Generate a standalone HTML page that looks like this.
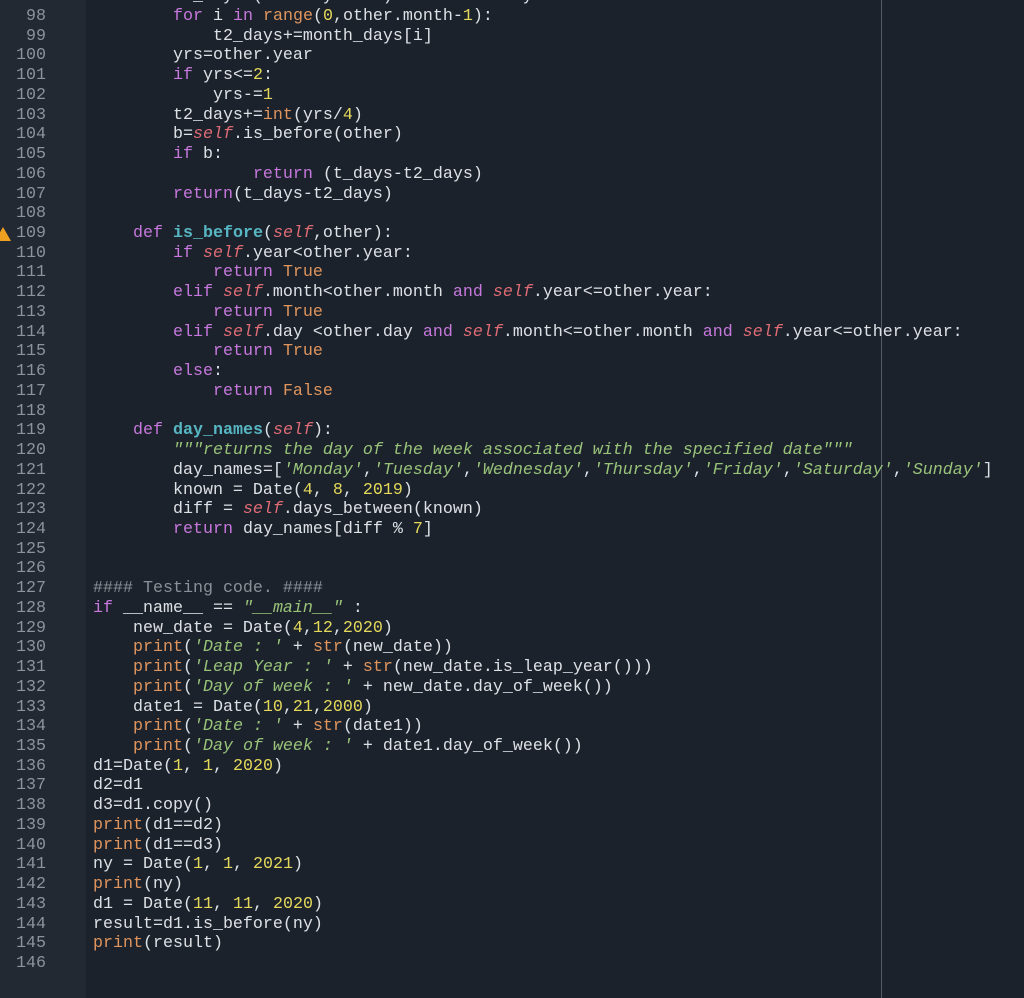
<!DOCTYPE html>
<html><head><meta charset="utf-8"><style>
html,body{margin:0;padding:0;}
body{width:1024px;height:998px;overflow:hidden;background:#1c222c;position:relative;font-family:"Liberation Mono",monospace;font-size:16.67px;}
#g{position:absolute;left:0;top:0;width:86px;height:998px;background:#222933;}
#ruler{position:absolute;left:881px;top:0;width:1px;height:998px;background:#555b63;}
.l{position:absolute;left:0;height:19.73px;line-height:19.73px;white-space:pre;color:#dde0e5;}
.n{position:absolute;left:0;width:46px;text-align:right;color:#8d939b;}
.c{position:absolute;left:93px;}
.k{color:#c678dd}.f{color:#56b6c2;font-weight:bold}.s{color:#e06c75;font-style:italic}.b{color:#e0955d}.y{color:#e5d95b}.g{color:#98c379;font-style:italic}.o{color:#e0955d}.cm{color:#8b9098}
#warn{position:absolute;left:0;top:227px;width:0;height:0;border-left:8px solid transparent;border-right:8px solid transparent;border-bottom:14px solid #f0a020;margin-left:-5px;}
</style></head><body>
<div id="g"></div><div id="ruler"></div>
<div id="warn"></div>
<div class="l" style="top:-12.7px"><span class="n">97</span><span class="c">        t2_days=(other.year-1)*365+other.day</span></div>
<div class="l" style="top:7px"><span class="n">98</span><span class="c">        <span class="k">for</span> i <span class="k">in</span> <span class="b">range</span>(<span class="y">0</span>,other.month-<span class="y">1</span>):</span></div>
<div class="l" style="top:26.73px"><span class="n">99</span><span class="c">            t2_days+=month_days[i]</span></div>
<div class="l" style="top:46.46px"><span class="n">100</span><span class="c">        yrs=other.year</span></div>
<div class="l" style="top:66.19px"><span class="n">101</span><span class="c">        <span class="k">if</span> yrs&lt;=<span class="y">2</span>:</span></div>
<div class="l" style="top:85.92px"><span class="n">102</span><span class="c">            yrs-=<span class="y">1</span></span></div>
<div class="l" style="top:105.65px"><span class="n">103</span><span class="c">        t2_days+=<span class="b">int</span>(yrs/<span class="y">4</span>)</span></div>
<div class="l" style="top:125.38px"><span class="n">104</span><span class="c">        b=<span class="s">self</span>.is_before(other)</span></div>
<div class="l" style="top:145.11px"><span class="n">105</span><span class="c">        <span class="k">if</span> b:</span></div>
<div class="l" style="top:164.84px"><span class="n">106</span><span class="c">                <span class="k">return</span> (t_days-t2_days)</span></div>
<div class="l" style="top:184.57px"><span class="n">107</span><span class="c">        <span class="k">return</span>(t_days-t2_days)</span></div>
<div class="l" style="top:204.3px"><span class="n">108</span><span class="c"></span></div>
<div class="l" style="top:224.03px"><span class="n">109</span><span class="c">    <span class="k">def</span> <span class="f">is_before</span>(<span class="s">self</span>,other):</span></div>
<div class="l" style="top:243.76px"><span class="n">110</span><span class="c">        <span class="k">if</span> <span class="s">self</span>.year&lt;other.year:</span></div>
<div class="l" style="top:263.49px"><span class="n">111</span><span class="c">            <span class="k">return</span> <span class="o">True</span></span></div>
<div class="l" style="top:283.22px"><span class="n">112</span><span class="c">        <span class="k">elif</span> <span class="s">self</span>.month&lt;other.month <span class="k">and</span> <span class="s">self</span>.year&lt;=other.year:</span></div>
<div class="l" style="top:302.95px"><span class="n">113</span><span class="c">            <span class="k">return</span> <span class="o">True</span></span></div>
<div class="l" style="top:322.68px"><span class="n">114</span><span class="c">        <span class="k">elif</span> <span class="s">self</span>.day &lt;other.day <span class="k">and</span> <span class="s">self</span>.month&lt;=other.month <span class="k">and</span> <span class="s">self</span>.year&lt;=other.year:</span></div>
<div class="l" style="top:342.41px"><span class="n">115</span><span class="c">            <span class="k">return</span> <span class="o">True</span></span></div>
<div class="l" style="top:362.14px"><span class="n">116</span><span class="c">        <span class="k">else</span>:</span></div>
<div class="l" style="top:381.87px"><span class="n">117</span><span class="c">            <span class="k">return</span> <span class="o">False</span></span></div>
<div class="l" style="top:401.6px"><span class="n">118</span><span class="c"></span></div>
<div class="l" style="top:421.33px"><span class="n">119</span><span class="c">    <span class="k">def</span> <span class="f">day_names</span>(<span class="s">self</span>):</span></div>
<div class="l" style="top:441.06px"><span class="n">120</span><span class="c">        <span class="g">"""returns the day of the week associated with the specified date"""</span></span></div>
<div class="l" style="top:460.79px"><span class="n">121</span><span class="c">        day_names=[<span class="g">'Monday'</span>,<span class="g">'Tuesday'</span>,<span class="g">'Wednesday'</span>,<span class="g">'Thursday'</span>,<span class="g">'Friday'</span>,<span class="g">'Saturday'</span>,<span class="g">'Sunday'</span>]</span></div>
<div class="l" style="top:480.52px"><span class="n">122</span><span class="c">        known = Date(<span class="y">4</span>, <span class="y">8</span>, <span class="y">2019</span>)</span></div>
<div class="l" style="top:500.25px"><span class="n">123</span><span class="c">        diff = <span class="s">self</span>.days_between(known)</span></div>
<div class="l" style="top:519.98px"><span class="n">124</span><span class="c">        <span class="k">return</span> day_names[diff % <span class="y">7</span>]</span></div>
<div class="l" style="top:539.71px"><span class="n">125</span><span class="c"></span></div>
<div class="l" style="top:559.44px"><span class="n">126</span><span class="c"></span></div>
<div class="l" style="top:579.17px"><span class="n">127</span><span class="c"><span class="cm">#### Testing code. ####</span></span></div>
<div class="l" style="top:598.9px"><span class="n">128</span><span class="c"><span class="k">if</span> __name__ == <span class="g">"__main__"</span> :</span></div>
<div class="l" style="top:618.63px"><span class="n">129</span><span class="c">    new_date = Date(<span class="y">4</span>,<span class="y">12</span>,<span class="y">2020</span>)</span></div>
<div class="l" style="top:638.36px"><span class="n">130</span><span class="c">    <span class="b">print</span>(<span class="g">'Date : '</span> + <span class="b">str</span>(new_date))</span></div>
<div class="l" style="top:658.09px"><span class="n">131</span><span class="c">    <span class="b">print</span>(<span class="g">'Leap Year : '</span> + <span class="b">str</span>(new_date.is_leap_year()))</span></div>
<div class="l" style="top:677.82px"><span class="n">132</span><span class="c">    <span class="b">print</span>(<span class="g">'Day of week : '</span> + new_date.day_of_week())</span></div>
<div class="l" style="top:697.55px"><span class="n">133</span><span class="c">    date1 = Date(<span class="y">10</span>,<span class="y">21</span>,<span class="y">2000</span>)</span></div>
<div class="l" style="top:717.28px"><span class="n">134</span><span class="c">    <span class="b">print</span>(<span class="g">'Date : '</span> + <span class="b">str</span>(date1))</span></div>
<div class="l" style="top:737.01px"><span class="n">135</span><span class="c">    <span class="b">print</span>(<span class="g">'Day of week : '</span> + date1.day_of_week())</span></div>
<div class="l" style="top:756.74px"><span class="n">136</span><span class="c">d1=Date(<span class="y">1</span>, <span class="y">1</span>, <span class="y">2020</span>)</span></div>
<div class="l" style="top:776.47px"><span class="n">137</span><span class="c">d2=d1</span></div>
<div class="l" style="top:796.2px"><span class="n">138</span><span class="c">d3=d1.copy()</span></div>
<div class="l" style="top:815.93px"><span class="n">139</span><span class="c"><span class="b">print</span>(d1==d2)</span></div>
<div class="l" style="top:835.66px"><span class="n">140</span><span class="c"><span class="b">print</span>(d1==d3)</span></div>
<div class="l" style="top:855.39px"><span class="n">141</span><span class="c">ny = Date(<span class="y">1</span>, <span class="y">1</span>, <span class="y">2021</span>)</span></div>
<div class="l" style="top:875.12px"><span class="n">142</span><span class="c"><span class="b">print</span>(ny)</span></div>
<div class="l" style="top:894.85px"><span class="n">143</span><span class="c">d1 = Date(<span class="y">11</span>, <span class="y">11</span>, <span class="y">2020</span>)</span></div>
<div class="l" style="top:914.58px"><span class="n">144</span><span class="c">result=d1.is_before(ny)</span></div>
<div class="l" style="top:934.31px"><span class="n">145</span><span class="c"><span class="b">print</span>(result)</span></div>
<div class="l" style="top:954.04px"><span class="n">146</span><span class="c"></span></div>
</body></html>
